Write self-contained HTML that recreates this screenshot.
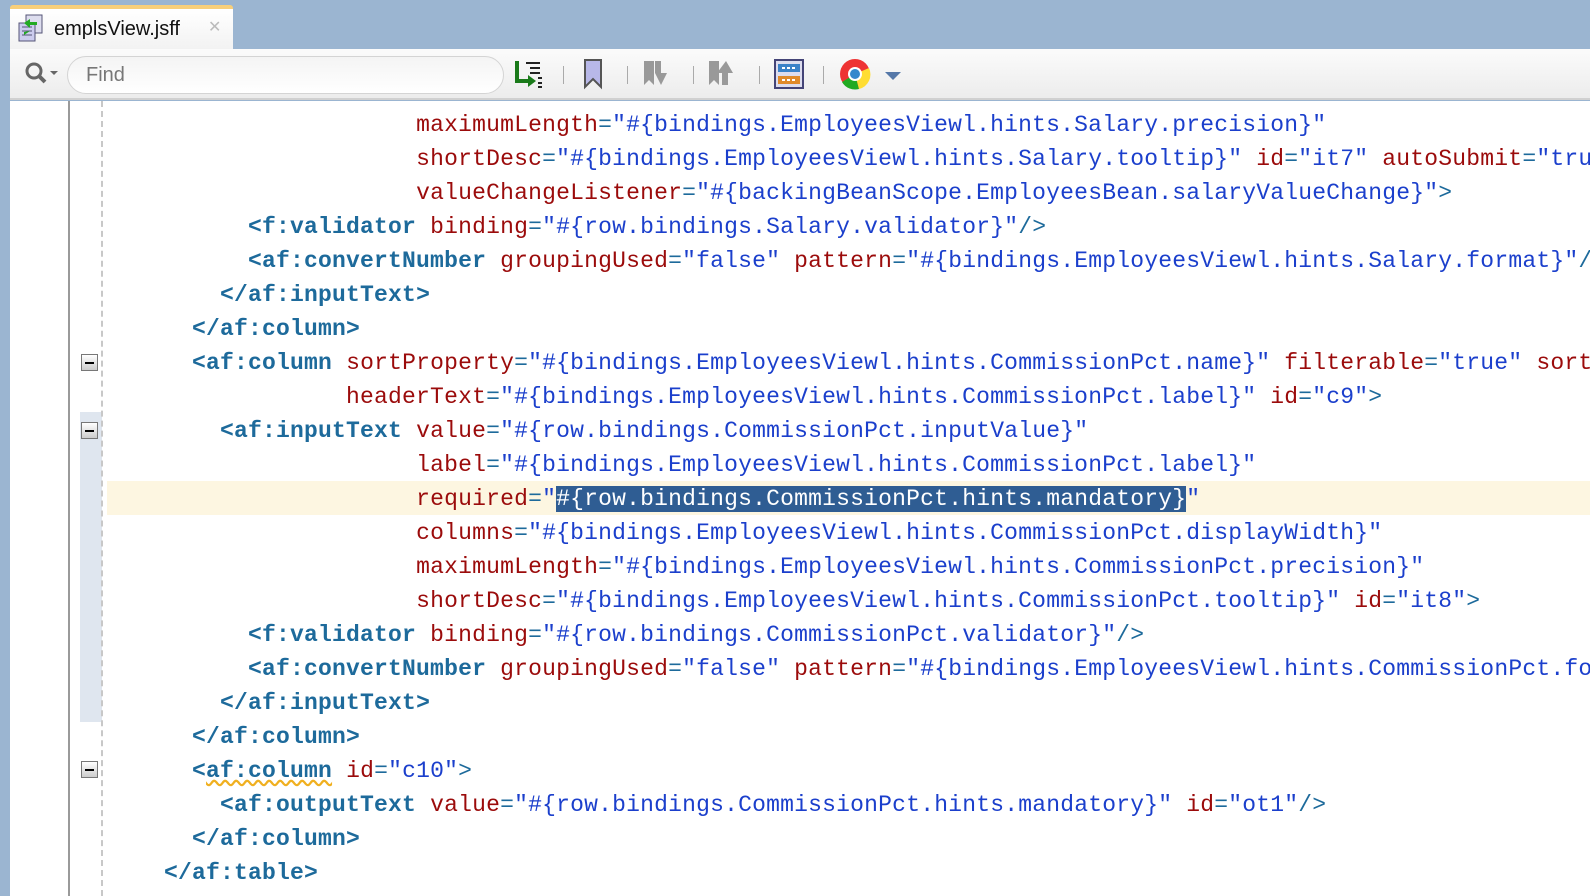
<!DOCTYPE html>
<html><head><meta charset="utf-8"><style>
*{margin:0;padding:0;box-sizing:border-box}
body{width:1590px;height:896px;overflow:hidden;background:#9bb5d1;position:relative;font-family:"Liberation Sans",sans-serif}
.tab{position:absolute;left:10px;top:5px;width:223px;height:45px;background:linear-gradient(#fff,#f2f2f2);border-top:4px solid #f8cf7a;border-radius:3px 3px 0 0}
.tab .t{position:absolute;left:44px;top:9px;font-size:20px;color:#111}
.tab .x{position:absolute;left:198px;top:8px;font-size:16px;color:#bbb}
.tb{position:absolute;left:10px;top:49px;width:1580px;height:51px;background:linear-gradient(#fbfbfb,#ececec);border-bottom:2px solid #d0d0d0}
.find{position:absolute;left:57px;top:7px;width:437px;height:38px;border:1px solid #d4d4d4;border-radius:19px;background:linear-gradient(#f4f4f4,#fff);font-size:20px;color:#777;padding:7px 0 0 18px}
.sep{position:absolute;top:17px;width:1px;height:18px;background:#aaa}
.ed{position:absolute;left:10px;top:101px;width:1580px;height:795px;background:#fff;overflow:hidden}
.gl{position:absolute;left:58px;top:0;width:2px;height:795px;background:#9a9a9a}
.fold{position:absolute;left:70px;top:311px;width:22px;height:310px;background:#dfe6ef}
.dash{position:absolute;left:91px;top:0;width:0;height:795px;border-left:2px dashed #c8c8c8}
.fb{position:absolute;left:71px;width:17px;height:17px;border:1px solid #777;background:linear-gradient(#fff,#ccc)}
.fb:after{content:"";position:absolute;left:3px;top:7px;width:9px;height:2px;background:#000}
.cur{position:absolute;left:97px;top:380px;width:1490px;height:34px;background:#fdf6e1}
.code{position:absolute;left:98px;top:7px;font-family:"Liberation Mono",monospace;font-size:23px;letter-spacing:0.2px;line-height:34px;white-space:pre;color:#1b3fcc}
.g{color:#1d6a9b;font-weight:bold}.p{color:#1d6a9b}.a{color:#9b0b0b}
.sel{background:#2f5d93;color:#fff}
.sq{text-decoration:underline wavy #f0b020}
</style></head><body>
<div class="tab">
<svg style="position:absolute;left:6px;top:4px" width="32" height="32" viewBox="0 0 32 32"><rect x="10" y="2" width="16" height="18" fill="#dde" stroke="#557"/><rect x="3" y="10" width="16" height="18" fill="#cce" stroke="#557"/><path d="M6 14h10M6 18h10M6 22h10" stroke="#557"/><path d="M8 10l6-4v3h7v3h-7v3z" fill="#2a2"/><path d="M14 18l-6 4v-3" fill="#2a2"/></svg>
<div class="t">emplsView.jsff</div><div class="x">✕</div></div>
<div class="tb">
<svg style="position:absolute;left:14px;top:12px" width="36" height="26"><circle cx="10" cy="10" r="7" fill="none" stroke="#666" stroke-width="3"/><path d="M15 15l6 6" stroke="#666" stroke-width="4"/><path d="M26 10h8l-4 4z" fill="#666"/></svg>
<div class="find">Find</div>
<svg style="position:absolute;left:504px;top:10px" width="32" height="32"><path d="M3 2v20h12" fill="none" stroke="#1a7a1a" stroke-width="4"/><path d="M14 16l8 6-8 6z" fill="#1a7a1a"/><path d="M12 4h14M16 9h10M16 14h10M24 19h4M24 24h4M24 28h4" stroke="#222" stroke-width="2"/></svg>
<div class="sep" style="left:553px"></div>
<svg style="position:absolute;left:571px;top:9px" width="26" height="32"><path d="M4 2h16v27l-8-8-8 8z" fill="#b8b8e8" stroke="#555" stroke-width="2"/></svg>
<div class="sep" style="left:617px"></div>
<svg style="position:absolute;left:632px;top:10px" width="36" height="30"><path d="M2 2h10v24l-5-5-5 5zM13 2h6v12h6l-6 12-6-12h0z" fill="#999"/></svg>
<div class="sep" style="left:683px"></div>
<svg style="position:absolute;left:697px;top:10px" width="36" height="30"><path d="M2 2h10v24l-5-5-5 5zM19 2l7 12h-5v12h-6v-12h-5z" fill="#999"/></svg>
<div class="sep" style="left:749px"></div>
<svg style="position:absolute;left:763px;top:9px" width="32" height="32"><rect x="2" y="2" width="28" height="28" fill="#dde" stroke="#447" stroke-width="2"/><rect x="5" y="6" width="22" height="8" fill="#3b82c8"/><rect x="5" y="18" width="22" height="8" fill="#e08a2a"/><path d="M9 10h14M9 22h14" stroke="#fff" stroke-dasharray="3 2" stroke-width="2"/></svg>
<div class="sep" style="left:813px"></div>
<svg style="position:absolute;left:829px;top:9px" width="32" height="32" viewBox="0 0 32 32"><circle cx="16" cy="16" r="15" fill="#e33"/><path d="M16 16L3 24A15 15 0 0 0 20 31z" fill="#2a2"/><path d="M16 16L20 31A15 15 0 0 0 30 10z" fill="#fd3"/><circle cx="16" cy="16" r="7" fill="#fff"/><circle cx="16" cy="16" r="5" fill="#38c"/></svg>
<svg style="position:absolute;left:874px;top:22px" width="18" height="10"><path d="M1 1h16l-8 8z" fill="#5578a8"/></svg>
</div>
<div class="ed">
<div class="gl"></div><div class="fold"></div><div class="dash"></div>
<div class="fb" style="top:253px"></div><div class="fb" style="top:321px"></div><div class="fb" style="top:660px"></div>
<div class="cur"></div>
<div class="code"><span>                      </span><span class="a">maximumLength</span><span class="p">=</span>"#{bindings.EmployeesViewl.hints.Salary.precision}"
                      <span class="a">shortDesc</span><span class="p">=</span>"#{bindings.EmployeesViewl.hints.Salary.tooltip}" <span class="a">id</span><span class="p">=</span>"it7" <span class="a">autoSubmit</span><span class="p">=</span>"true"
                      <span class="a">valueChangeListener</span><span class="p">=</span>"#{backingBeanScope.EmployeesBean.salaryValueChange}"<span class="p">&gt;</span>
          <span class="g">&lt;f:validator</span> <span class="a">binding</span><span class="p">=</span>"#{row.bindings.Salary.validator}"<span class="p">/&gt;</span>
          <span class="g">&lt;af:convertNumber</span> <span class="a">groupingUsed</span><span class="p">=</span>"false" <span class="a">pattern</span><span class="p">=</span>"#{bindings.EmployeesViewl.hints.Salary.format}"<span class="p">/&gt;</span>
        <span class="g">&lt;/af:inputText&gt;</span>
      <span class="g">&lt;/af:column&gt;</span>
      <span class="g">&lt;af:column</span> <span class="a">sortProperty</span><span class="p">=</span>"#{bindings.EmployeesViewl.hints.CommissionPct.name}" <span class="a">filterable</span><span class="p">=</span>"true" <span class="a">sortable</span>
                 <span class="a">headerText</span><span class="p">=</span>"#{bindings.EmployeesViewl.hints.CommissionPct.label}" <span class="a">id</span><span class="p">=</span>"c9"<span class="p">&gt;</span>
        <span class="g">&lt;af:inputText</span> <span class="a">value</span><span class="p">=</span>"#{row.bindings.CommissionPct.inputValue}"
                      <span class="a">label</span><span class="p">=</span>"#{bindings.EmployeesViewl.hints.CommissionPct.label}"
                      <span class="a">required</span><span class="p">=</span>"<span class="sel">#{row.bindings.CommissionPct.hints.mandatory}</span>"
                      <span class="a">columns</span><span class="p">=</span>"#{bindings.EmployeesViewl.hints.CommissionPct.displayWidth}"
                      <span class="a">maximumLength</span><span class="p">=</span>"#{bindings.EmployeesViewl.hints.CommissionPct.precision}"
                      <span class="a">shortDesc</span><span class="p">=</span>"#{bindings.EmployeesViewl.hints.CommissionPct.tooltip}" <span class="a">id</span><span class="p">=</span>"it8"<span class="p">&gt;</span>
          <span class="g">&lt;f:validator</span> <span class="a">binding</span><span class="p">=</span>"#{row.bindings.CommissionPct.validator}"<span class="p">/&gt;</span>
          <span class="g">&lt;af:convertNumber</span> <span class="a">groupingUsed</span><span class="p">=</span>"false" <span class="a">pattern</span><span class="p">=</span>"#{bindings.EmployeesViewl.hints.CommissionPct.format}"<span class="p">/&gt;</span>
        <span class="g">&lt;/af:inputText&gt;</span>
      <span class="g">&lt;/af:column&gt;</span>
      <span class="g">&lt;<span class="sq">af:column</span></span> <span class="a">id</span><span class="p">=</span>"c10"<span class="p">&gt;</span>
        <span class="g">&lt;af:outputText</span> <span class="a">value</span><span class="p">=</span>"#{row.bindings.CommissionPct.hints.mandatory}" <span class="a">id</span><span class="p">=</span>"ot1"<span class="p">/&gt;</span>
      <span class="g">&lt;/af:column&gt;</span>
    <span class="g">&lt;/af:table&gt;</span></div>
</div>
</body></html>
